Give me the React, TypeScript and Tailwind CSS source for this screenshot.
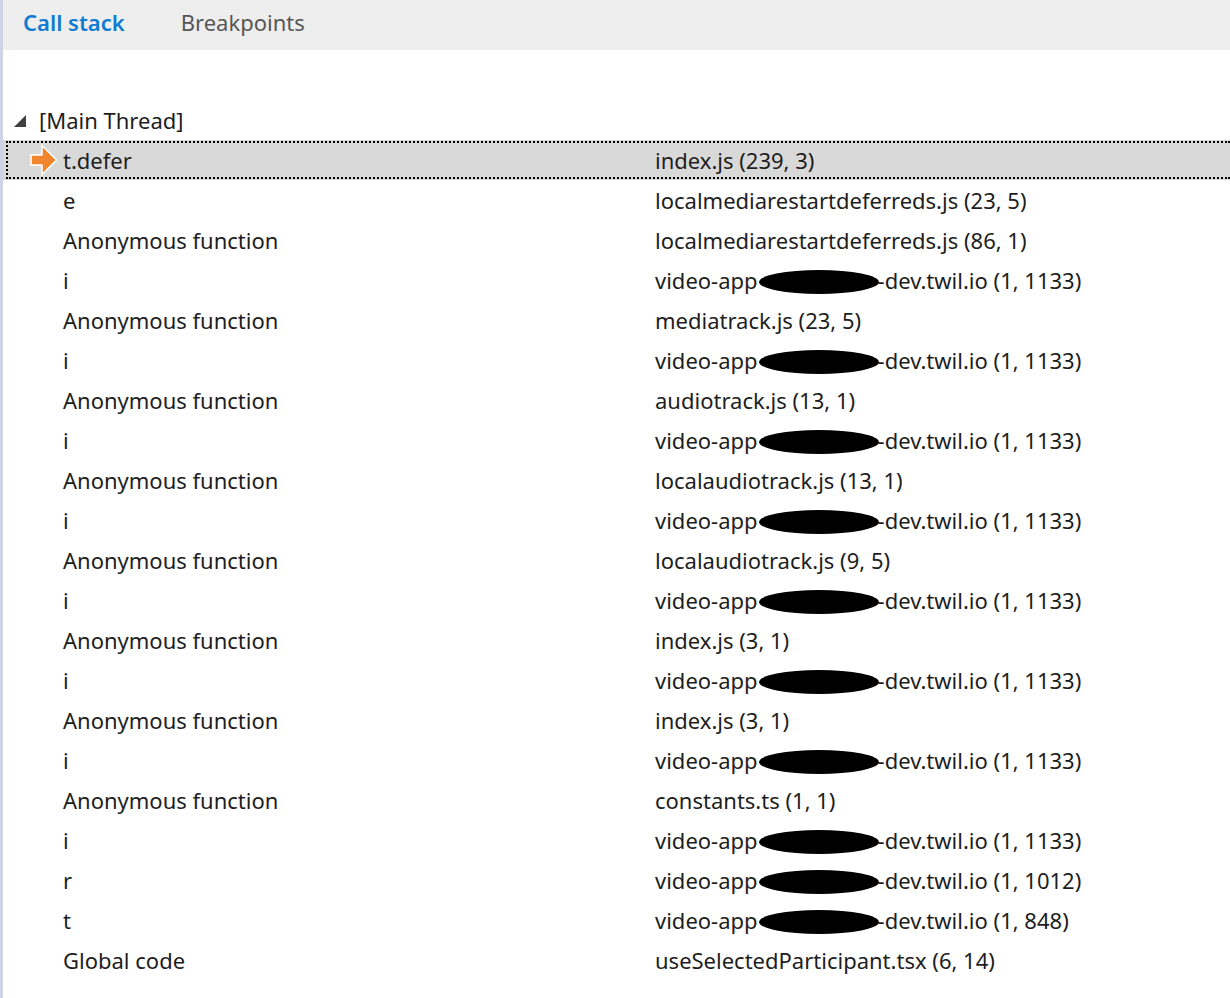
import React from "react";

const rows: [string, string][] = [
  ["e", "localmediarestartdeferreds.js (23, 5)"],
  ["Anonymous function", "localmediarestartdeferreds.js (86, 1)"],
  ["i", "R:1133"],
  ["Anonymous function", "mediatrack.js (23, 5)"],
  ["i", "R:1133"],
  ["Anonymous function", "audiotrack.js (13, 1)"],
  ["i", "R:1133"],
  ["Anonymous function", "localaudiotrack.js (13, 1)"],
  ["i", "R:1133"],
  ["Anonymous function", "localaudiotrack.js (9, 5)"],
  ["i", "R:1133"],
  ["Anonymous function", "index.js (3, 1)"],
  ["i", "R:1133"],
  ["Anonymous function", "index.js (3, 1)"],
  ["i", "R:1133"],
  ["Anonymous function", "constants.ts (1, 1)"],
  ["i", "R:1133"],
  ["r", "R:1012"],
  ["t", "R:848"],
  ["Global code", "useSelectedParticipant.tsx (6, 14)"],
];

function Redacted({ n }: { n: string }) {
  return (
    <span className="flex items-center">
      <span>video-app</span>
      <span className="inline-block w-[120px] h-[24px] bg-black rounded-[50%] ml-[1px] -mr-[1px] mt-[3px] relative" />
      <span>-dev.twil.io (1, {n})</span>
    </span>
  );
}

function Arrow() {
  return (
    <svg width="28" height="32" viewBox="0 0 28 32" className="block shrink-0">
      <path
        d="M1 11 H12 V1.5 L26.5 16 L12 30.5 V21 H1 Z"
        fill="#f0852d"
        stroke="#ffffff"
        strokeWidth="1.5"
        strokeLinejoin="miter"
      />
    </svg>
  );
}

export default function App() {
  return (
    <div
      className="w-[1230px] h-[998px] bg-white flex text-[#1e1e1e] overflow-hidden"
      style={{ fontFamily: '"Segoe UI", "Noto Sans", "Open Sans", sans-serif' }}
    >
      <div className="w-[3px] bg-[#d0d2e6] shrink-0" />
      <div className="flex-1 flex flex-col">
        <div className="h-[50px] bg-[#eeeeee] flex items-center gap-[56px] pl-[20px] pb-[6px] text-[22px]">
          <span className="font-semibold text-[#0f7bd3]">Call stack</span>
          <span className="text-[#575757]">Breakpoints</span>
        </div>
        <div className="h-[50px]" />
        <div className="h-[40px] flex items-center text-[22px]">
          <span className="w-0 h-0 border-l-[12px] border-l-transparent border-b-[12px] border-b-[#404040] ml-[11px] mr-[13px] mt-[2px]" />
          <span>[Main Thread]</span>
        </div>
        <div className="h-[40px] bg-[#d9d9d9] py-[1px]">
          <div className="h-full ml-[3px] border-y-2 border-l-2 border-dotted border-black flex items-center text-[22px]">
            <div className="w-[55px] flex justify-end pr-[5px]">
              <Arrow />
            </div>
            <span className="w-[592px]">t.defer</span>
            <span>index.js (239, 3)</span>
          </div>
        </div>
        {rows.map(([a, b], i) => (
          <div key={i} className="h-[40px] flex items-center text-[22px]">
            <span className="w-[652px] pl-[60px]">{a}</span>
            {b.startsWith("R:") ? <Redacted n={b.slice(2)} /> : <span>{b}</span>}
          </div>
        ))}
      </div>
    </div>
  );
}
